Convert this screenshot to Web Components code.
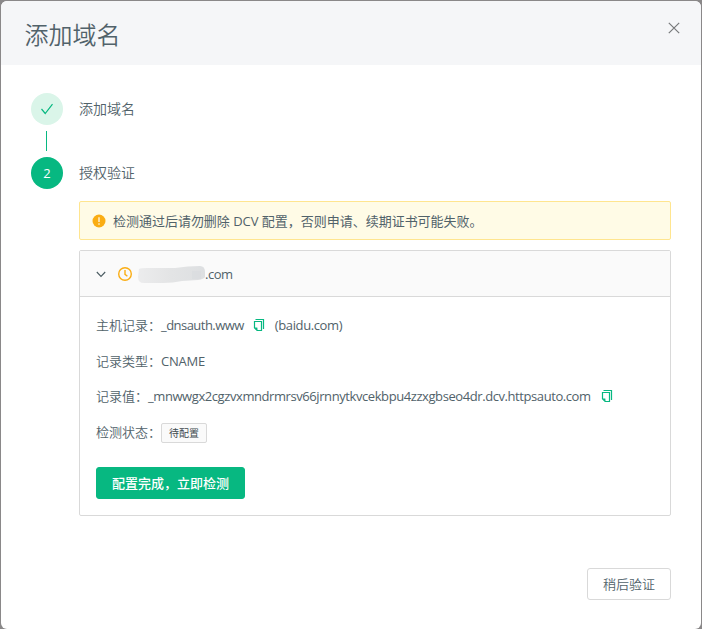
<!DOCTYPE html>
<html lang="zh-CN">
<head>
<meta charset="utf-8">
<title>添加域名</title>
<style>
html,body{margin:0;height:100%}
body{background:#8a8889;box-sizing:border-box;padding:1px 1px 0;overflow:hidden;font:400 13px/20px "Open Sans","Noto Sans CJK SC",sans-serif;color:#51626a}
</style>
</head>
<body>
<domain-dialog></domain-dialog>
<script>
function define(name, html) {
  customElements.define(name, class extends HTMLElement {
    constructor() {
      super();
      const t = document.createElement('template');
      t.innerHTML = html;
      this.attachShadow({mode: 'open'}).append(t.content.cloneNode(true));
    }
  });
}

define('copy-icon', `<style>:host{display:inline-flex;width:12px;height:14px;color:#07b881}</style>
<svg width="12" height="14" viewBox="0 0 12 14" fill="none" stroke="currentColor" stroke-width="1.2"><path d="M2.5 1.5H10.5V11"/><path d="M1.5 3.5H8.5V12.5H4.2L1.5 9.8Z"/><path d="M1.5 9.8H4.2V12.5Z" fill="currentColor" stroke-width=".4"/></svg>`);

define('step-item', `<style>
:host{display:flex;align-items:center;height:32px;gap:16px;font-size:14px;font-weight:350}
.dot{width:32px;height:32px;border-radius:50%;display:flex;align-items:center;justify-content:center;background:#07b881;color:#fff;font-size:13px;font-weight:400}
:host([done]) .dot{background:#daf5e9;color:#07b881}
</style><div class="dot"><slot name="mark"></slot></div><span><slot></slot></span>`);

define('notice-bar', `<style>
:host{display:flex;align-items:center;gap:7.5px;height:39px;box-sizing:border-box;padding:0 11.5px;border:1px solid #ffe58f;border-radius:2px;background:#fffbe6}
svg{flex:none}
</style><svg width="14" height="14" viewBox="0 0 14 14"><circle cx="7" cy="7" r="6.5" fill="#faad14"/><path d="M7 3.2V8" stroke="#fff" stroke-width="1.2"/><circle cx="7" cy="10" r=".8" fill="#fff"/></svg><span><slot></slot></span>`);

define('record-row', `<style>:host{display:flex;align-items:center;height:20px;white-space:nowrap}</style><slot></slot>`);
define('status-tag', `<style>:host{display:flex;align-items:center;justify-content:center;box-sizing:border-box;width:46px;height:20px;margin-top:2px;border:1px solid #d9d9d9;border-radius:2px;background:#fafafa;font-size:10px;color:#3f4b50}</style><slot></slot>`);
define('action-button', `<style>
:host{display:flex;align-items:center;justify-content:center;box-sizing:border-box;height:32px;border:1px solid #d9d9d9;border-radius:3px;background:#fff;font-weight:350}
:host([primary]){background:#07b881;border-color:#07b881;color:#fff;font-weight:500}
</style><slot></slot>`);

define('record-card', `<style>
:host{display:block;box-sizing:border-box;height:266px;border:1px solid #d9d9d9;border-radius:2px;background:#fff}
header{display:flex;align-items:center;height:45px;padding-left:16px;background:#fafafa;border-bottom:1px solid #d9d9d9}
.clock{margin-left:12px}.mask{margin-left:6px;margin-right:-1px}
.rows{display:flex;flex-direction:column;padding:18px 16px 0}
record-row+record-row{margin-top:15.7px}
.label{font-weight:350}
.host{letter-spacing:-.54px}
.base{letter-spacing:-.38px}
.type{letter-spacing:-.2px}
.val{letter-spacing:-.42px}
.suffix{letter-spacing:-.5px}
action-button{width:149px;margin-top:25px}
</style>
<header>
<svg width="10" height="10" viewBox="0 0 10 10" fill="none" stroke="#495a60" stroke-width="1.1"><path d="M.8 3L5 7.4L9.2 3"/></svg>
<svg class="clock" width="14" height="14" viewBox="0 0 14 14" fill="none" stroke="#faad14" stroke-width="1.4"><circle cx="7" cy="7" r="6.3"/><path d="M7 3V7.4L9.4 9.3"/></svg>
<svg class="mask" width="68" height="20" viewBox="0 0 68 20"><defs><linearGradient id="g"><stop stop-color="#ececed"/><stop offset=".5" stop-color="#e3e4e5"/><stop offset="1" stop-color="#dddfe1"/></linearGradient></defs><path d="M1 5Q3 4 9 4L37 4Q50 2 62 2Q67 2 67 8V13Q66 15 60 16L44 17Q35 19 25 19H6Q0 19 0 13Z" fill="url(#g)"/><path d="M54 7h9v8h-9z" fill="#d5d7d9" opacity=".3"/></svg>
<span class="suffix">.com</span>
</header>
<div class="rows">
<record-row><span class="label">主机记录：</span><span class="host">_dnsauth.www</span><copy-icon style="margin:0 9.5px 0 9.5px"></copy-icon><span class="base">(baidu.com)</span></record-row>
<record-row><span class="label">记录类型：</span><span class="type">CNAME</span></record-row>
<record-row><span class="label">记录值：</span><span class="val">_mnwwgx2cgzvxmndrmrsv66jrnnytkvcekbpu4zzxgbseo4dr.dcv.httpsauto.com</span><copy-icon style="margin-left:10px"></copy-icon></record-row>
<record-row><span class="label">检测状态：</span><status-tag>待配置</status-tag></record-row>
<action-button primary>配置完成，立即检测</action-button>
</div>`);

define('domain-dialog', `<style>
:host{display:flex;flex-direction:column;height:628px;background:#fff;border-radius:6px;overflow:hidden}
header{display:flex;justify-content:space-between;height:64px;box-sizing:border-box;padding:0 21px 0 23.5px;background:#f5f6f8}
h1{margin:16px 0 0;font-size:24px;line-height:36px;font-weight:350}
.close{margin-top:21px}
main{display:flex;flex-direction:column;padding:28px 30px 0}
.line{width:1px;height:20px;margin:6px 0 6px 15px;background:#07b881}
notice-bar{margin:12px 0 0 48px;letter-spacing:-.02px}
record-card{margin:10px 0 0 48px}
footer{display:flex;justify-content:flex-end;padding:52px 30px 0}
footer action-button{width:84px}
</style>
<header><h1>添加域名</h1><svg class="close" width="12" height="12" viewBox="0 0 12 12" stroke="#77797b" stroke-width="1.2"><path d="M.8.8L11.2 11.2M11.2.8L.8 11.2"/></svg></header>
<main>
<step-item done><svg slot="mark" width="14" height="12" viewBox="0 0 14 12" fill="none" stroke="currentColor" stroke-width="1.2"><path d="M1.5 6L5.2 10.5L12.5 1.2"/></svg>添加域名</step-item>
<div class="line"></div>
<step-item><span slot="mark" style="font-weight:400">2</span>授权验证</step-item>
<notice-bar>检测通过后请勿删除 DCV 配置，否则申请、续期证书可能失败。</notice-bar>
<record-card></record-card>
</main>
<footer><action-button>稍后验证</action-button></footer>`);
</script>
</body>
</html>
